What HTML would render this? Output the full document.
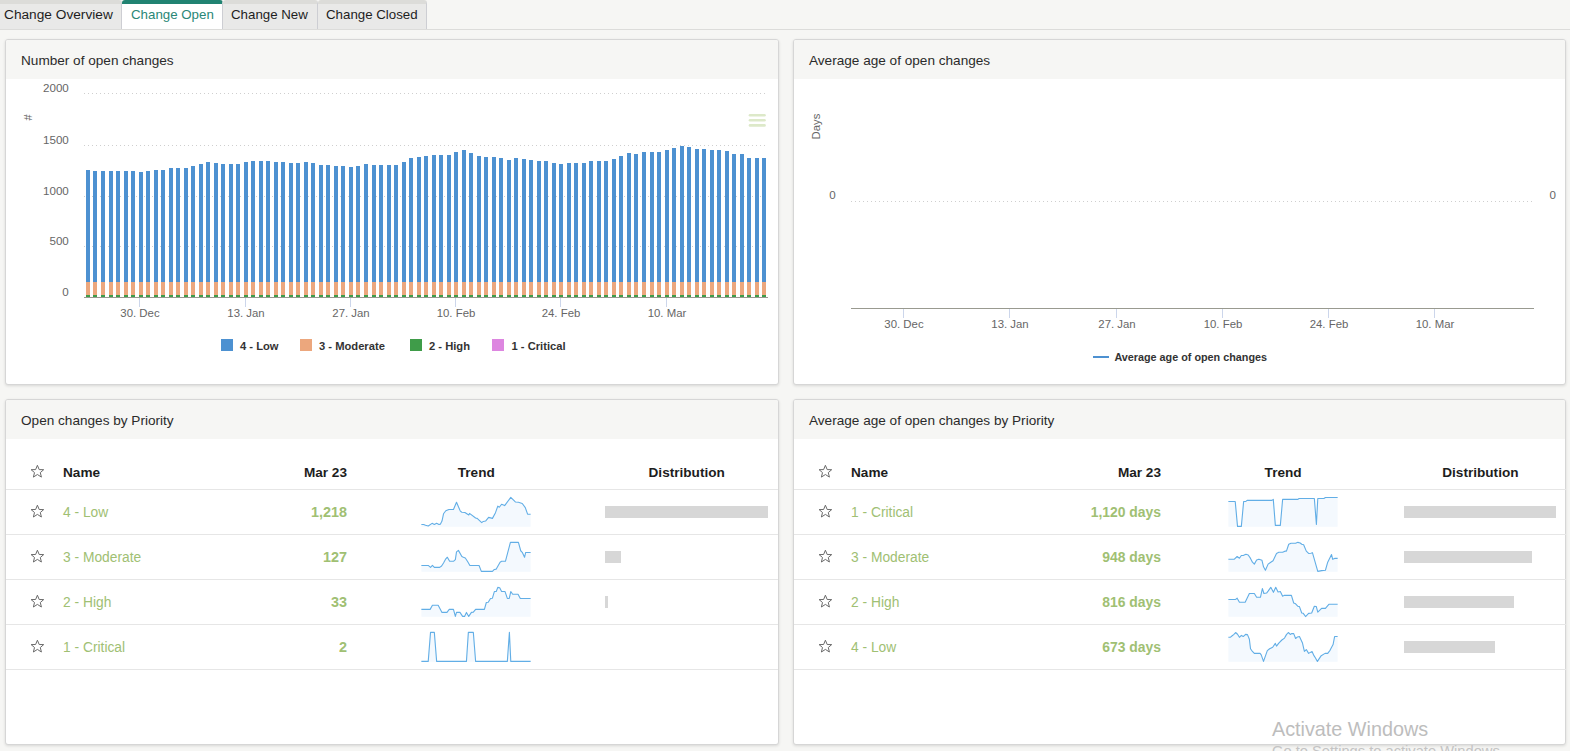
<!DOCTYPE html>
<html><head><meta charset="utf-8"><style>
*{box-sizing:border-box;margin:0;padding:0}
html,body{width:1570px;height:751px;overflow:hidden;background:#f6f6f4;font-family:"Liberation Sans", sans-serif;color:#2b2b2b}
.abs{position:absolute;white-space:nowrap}
.tabbar{position:absolute;left:0;top:0;width:1570px;height:30px;background:#f6f6f4;border-bottom:1px solid #dcdcda}
.tab{position:absolute;top:0;height:29px;background:#e9e9e8;border-top:4px solid #dcdcd9;border-right:1px solid #cdced3;border-radius:3px 3px 0 0;font-size:13.3px;line-height:24px;color:#1e1e1e}
.tab span{position:absolute;top:-1.5px}
.tab.active{background:#fff;border-top-color:#218372;color:#2a8777}
.panel{position:absolute;background:#fff;border:1px solid #d6d6d6;border-radius:3px;box-shadow:0 1px 3px rgba(0,0,0,0.12);overflow:hidden}
.phead{position:absolute;left:0;top:0;right:0;height:39px;background:#f6f6f4}
.ptitle{position:absolute;left:15px;top:12.5px;font-size:13.6px;line-height:16px;color:#2b2b2b;white-space:nowrap}
.sep{position:absolute;height:1px;background:#e6e6e6}
.th{position:absolute;font-size:13.6px;font-weight:700;color:#1d1d1d;line-height:16px;white-space:nowrap}
.td{position:absolute;font-size:13.8px;color:#a0c073;line-height:16px;white-space:nowrap}
.tdb{position:absolute;font-size:13.8px;font-weight:700;color:#a0c073;line-height:16px;white-space:nowrap}
.dist{position:absolute;height:12px;background:#d7d7d7}
svg text{font-family:"Liberation Sans", sans-serif}
</style></head><body>
<div class="tabbar"></div>
<div class="tab" style="left:-4px;width:126px"><span style="left:8px;font-size:13.7px">Change Overview</span></div>
<div class="tab active" style="left:122px;width:101px"><span style="left:9px">Change Open</span></div>
<div class="tab" style="left:223px;width:95px"><span style="left:8px">Change New</span></div>
<div class="tab" style="left:318px;width:109px"><span style="left:8px">Change Closed</span></div>

<div class="panel" style="left:5px;top:39px;width:774px;height:346px"><div class="phead"></div><div class="ptitle">Number of open changes</div></div>
<div class="panel" style="left:793px;top:39px;width:773px;height:346px"><div class="phead"></div><div class="ptitle">Average age of open changes</div></div>
<div class="panel" style="left:5px;top:399px;width:774px;height:346px"><div class="phead"></div><div class="ptitle">Open changes by Priority</div></div>
<div class="panel" style="left:793px;top:399px;width:773px;height:346px"><div class="phead"></div><div class="ptitle">Average age of open changes by Priority</div></div>
<div class="sep" style="left:6px;top:489px;width:772px"></div>
<div class="sep" style="left:6px;top:534px;width:772px"></div>
<div class="sep" style="left:6px;top:579px;width:772px"></div>
<div class="sep" style="left:6px;top:624px;width:772px"></div>
<div class="sep" style="left:6px;top:669px;width:772px"></div>
<div class="th" style="left:63px;top:465px">Name</div>
<div class="th" style="left:147px;width:200px;text-align:right;top:465px">Mar 23</div>
<div class="th" style="left:376.3px;width:200px;text-align:center;top:465px">Trend</div>
<div class="th" style="left:586.7px;width:200px;text-align:center;top:465px">Distribution</div>
<div class="td" style="left:63px;top:505px">4 - Low</div>
<div class="tdb" style="left:147px;width:200px;text-align:right;top:503.6px;font-size:14.4px">1,218</div>
<div class="dist" style="left:605px;top:506px;width:163px"></div>
<div class="td" style="left:63px;top:550px">3 - Moderate</div>
<div class="tdb" style="left:147px;width:200px;text-align:right;top:548.6px;font-size:14.4px">127</div>
<div class="dist" style="left:605px;top:551px;width:16px"></div>
<div class="td" style="left:63px;top:595px">2 - High</div>
<div class="tdb" style="left:147px;width:200px;text-align:right;top:593.6px;font-size:14.4px">33</div>
<div class="dist" style="left:605px;top:596px;width:3px"></div>
<div class="td" style="left:63px;top:640px">1 - Critical</div>
<div class="tdb" style="left:147px;width:200px;text-align:right;top:638.6px;font-size:14.4px">2</div>
<div class="sep" style="left:794px;top:489px;width:772px"></div>
<div class="sep" style="left:794px;top:534px;width:772px"></div>
<div class="sep" style="left:794px;top:579px;width:772px"></div>
<div class="sep" style="left:794px;top:624px;width:772px"></div>
<div class="sep" style="left:794px;top:669px;width:772px"></div>
<div class="th" style="left:851px;top:465px">Name</div>
<div class="th" style="left:961px;width:200px;text-align:right;top:465px">Mar 23</div>
<div class="th" style="left:1183.1px;width:200px;text-align:center;top:465px">Trend</div>
<div class="th" style="left:1380.4px;width:200px;text-align:center;top:465px">Distribution</div>
<div class="td" style="left:851px;top:505px">1 - Critical</div>
<div class="tdb" style="left:961px;width:200px;text-align:right;top:504px;font-size:13.9px">1,120 days</div>
<div class="dist" style="left:1404px;top:506px;width:152px"></div>
<div class="td" style="left:851px;top:550px">3 - Moderate</div>
<div class="tdb" style="left:961px;width:200px;text-align:right;top:549px;font-size:13.9px">948 days</div>
<div class="dist" style="left:1404px;top:551px;width:128px"></div>
<div class="td" style="left:851px;top:595px">2 - High</div>
<div class="tdb" style="left:961px;width:200px;text-align:right;top:594px;font-size:13.9px">816 days</div>
<div class="dist" style="left:1404px;top:596px;width:110px"></div>
<div class="td" style="left:851px;top:640px">4 - Low</div>
<div class="tdb" style="left:961px;width:200px;text-align:right;top:639px;font-size:13.9px">673 days</div>
<div class="dist" style="left:1404px;top:641px;width:91px"></div>
<svg class="abs" style="left:0;top:0" width="1570" height="751" shape-rendering="auto"><line x1="84" y1="93.5" x2="766" y2="93.5" stroke="#cfcfcf" stroke-width="1" stroke-dasharray="1,3"/><line x1="84" y1="145.5" x2="766" y2="145.5" stroke="#cfcfcf" stroke-width="1" stroke-dasharray="1,3"/><line x1="84" y1="196.5" x2="766" y2="196.5" stroke="#cfcfcf" stroke-width="1" stroke-dasharray="1,3"/><line x1="84" y1="246.5" x2="766" y2="246.5" stroke="#cfcfcf" stroke-width="1" stroke-dasharray="1,3"/><rect x="86" y="170" width="4" height="112" fill="#4d91d1"/><rect x="86" y="282" width="4" height="13" fill="#eca77d"/><rect x="86" y="295" width="4" height="2" fill="#3f9c49"/><rect x="93" y="171" width="4" height="111" fill="#4d91d1"/><rect x="93" y="282" width="4" height="13" fill="#eca77d"/><rect x="93" y="295" width="4" height="2" fill="#3f9c49"/><rect x="101" y="171" width="4" height="111" fill="#4d91d1"/><rect x="101" y="282" width="4" height="13" fill="#eca77d"/><rect x="101" y="295" width="4" height="2" fill="#3f9c49"/><rect x="109" y="171" width="4" height="111" fill="#4d91d1"/><rect x="109" y="282" width="4" height="13" fill="#eca77d"/><rect x="109" y="295" width="4" height="2" fill="#3f9c49"/><rect x="116" y="171" width="4" height="111" fill="#4d91d1"/><rect x="116" y="282" width="4" height="13" fill="#eca77d"/><rect x="116" y="295" width="4" height="2" fill="#3f9c49"/><rect x="124" y="171" width="4" height="111" fill="#4d91d1"/><rect x="124" y="282" width="4" height="13" fill="#eca77d"/><rect x="124" y="295" width="4" height="2" fill="#3f9c49"/><rect x="131" y="171" width="4" height="111" fill="#4d91d1"/><rect x="131" y="282" width="4" height="13" fill="#eca77d"/><rect x="131" y="295" width="4" height="2" fill="#3f9c49"/><rect x="139" y="172" width="4" height="110" fill="#4d91d1"/><rect x="139" y="282" width="4" height="13" fill="#eca77d"/><rect x="139" y="295" width="4" height="2" fill="#3f9c49"/><rect x="146" y="171" width="4" height="111" fill="#4d91d1"/><rect x="146" y="282" width="4" height="13" fill="#eca77d"/><rect x="146" y="295" width="4" height="2" fill="#3f9c49"/><rect x="154" y="170" width="4" height="112" fill="#4d91d1"/><rect x="154" y="282" width="4" height="13" fill="#eca77d"/><rect x="154" y="295" width="4" height="2" fill="#3f9c49"/><rect x="161" y="170" width="4" height="112" fill="#4d91d1"/><rect x="161" y="282" width="4" height="13" fill="#eca77d"/><rect x="161" y="295" width="4" height="2" fill="#3f9c49"/><rect x="169" y="168" width="4" height="114" fill="#4d91d1"/><rect x="169" y="282" width="4" height="13" fill="#eca77d"/><rect x="169" y="295" width="4" height="2" fill="#3f9c49"/><rect x="176" y="168" width="4" height="114" fill="#4d91d1"/><rect x="176" y="282" width="4" height="13" fill="#eca77d"/><rect x="176" y="295" width="4" height="2" fill="#3f9c49"/><rect x="184" y="168" width="4" height="114" fill="#4d91d1"/><rect x="184" y="282" width="4" height="13" fill="#eca77d"/><rect x="184" y="295" width="4" height="2" fill="#3f9c49"/><rect x="191" y="166" width="4" height="116" fill="#4d91d1"/><rect x="191" y="282" width="4" height="13" fill="#eca77d"/><rect x="191" y="295" width="4" height="2" fill="#3f9c49"/><rect x="199" y="164" width="4" height="118" fill="#4d91d1"/><rect x="199" y="282" width="4" height="13" fill="#eca77d"/><rect x="199" y="295" width="4" height="2" fill="#3f9c49"/><rect x="206" y="162" width="4" height="120" fill="#4d91d1"/><rect x="206" y="282" width="4" height="13" fill="#eca77d"/><rect x="206" y="295" width="4" height="2" fill="#3f9c49"/><rect x="214" y="163" width="4" height="119" fill="#4d91d1"/><rect x="214" y="282" width="4" height="13" fill="#eca77d"/><rect x="214" y="295" width="4" height="2" fill="#3f9c49"/><rect x="221" y="164" width="4" height="118" fill="#4d91d1"/><rect x="221" y="282" width="4" height="13" fill="#eca77d"/><rect x="221" y="295" width="4" height="2" fill="#3f9c49"/><rect x="229" y="164" width="4" height="118" fill="#4d91d1"/><rect x="229" y="282" width="4" height="13" fill="#eca77d"/><rect x="229" y="295" width="4" height="2" fill="#3f9c49"/><rect x="236" y="164" width="4" height="118" fill="#4d91d1"/><rect x="236" y="282" width="4" height="13" fill="#eca77d"/><rect x="236" y="295" width="4" height="2" fill="#3f9c49"/><rect x="244" y="162" width="4" height="120" fill="#4d91d1"/><rect x="244" y="282" width="4" height="13" fill="#eca77d"/><rect x="244" y="295" width="4" height="2" fill="#3f9c49"/><rect x="251" y="161" width="4" height="121" fill="#4d91d1"/><rect x="251" y="282" width="4" height="13" fill="#eca77d"/><rect x="251" y="295" width="4" height="2" fill="#3f9c49"/><rect x="259" y="161" width="4" height="121" fill="#4d91d1"/><rect x="259" y="282" width="4" height="13" fill="#eca77d"/><rect x="259" y="295" width="4" height="2" fill="#3f9c49"/><rect x="266" y="161" width="4" height="121" fill="#4d91d1"/><rect x="266" y="282" width="4" height="13" fill="#eca77d"/><rect x="266" y="295" width="4" height="2" fill="#3f9c49"/><rect x="274" y="162" width="4" height="120" fill="#4d91d1"/><rect x="274" y="282" width="4" height="13" fill="#eca77d"/><rect x="274" y="295" width="4" height="2" fill="#3f9c49"/><rect x="281" y="162" width="4" height="120" fill="#4d91d1"/><rect x="281" y="282" width="4" height="13" fill="#eca77d"/><rect x="281" y="295" width="4" height="2" fill="#3f9c49"/><rect x="289" y="163" width="4" height="119" fill="#4d91d1"/><rect x="289" y="282" width="4" height="13" fill="#eca77d"/><rect x="289" y="295" width="4" height="2" fill="#3f9c49"/><rect x="296" y="163" width="4" height="119" fill="#4d91d1"/><rect x="296" y="282" width="4" height="13" fill="#eca77d"/><rect x="296" y="295" width="4" height="2" fill="#3f9c49"/><rect x="304" y="162" width="4" height="120" fill="#4d91d1"/><rect x="304" y="282" width="4" height="13" fill="#eca77d"/><rect x="304" y="295" width="4" height="2" fill="#3f9c49"/><rect x="311" y="163" width="4" height="119" fill="#4d91d1"/><rect x="311" y="282" width="4" height="13" fill="#eca77d"/><rect x="311" y="295" width="4" height="2" fill="#3f9c49"/><rect x="319" y="165" width="4" height="117" fill="#4d91d1"/><rect x="319" y="282" width="4" height="13" fill="#eca77d"/><rect x="319" y="295" width="4" height="2" fill="#3f9c49"/><rect x="326" y="165" width="4" height="117" fill="#4d91d1"/><rect x="326" y="282" width="4" height="13" fill="#eca77d"/><rect x="326" y="295" width="4" height="2" fill="#3f9c49"/><rect x="334" y="166" width="4" height="116" fill="#4d91d1"/><rect x="334" y="282" width="4" height="13" fill="#eca77d"/><rect x="334" y="295" width="4" height="2" fill="#3f9c49"/><rect x="341" y="166" width="4" height="116" fill="#4d91d1"/><rect x="341" y="282" width="4" height="13" fill="#eca77d"/><rect x="341" y="295" width="4" height="2" fill="#3f9c49"/><rect x="349" y="167" width="4" height="115" fill="#4d91d1"/><rect x="349" y="282" width="4" height="13" fill="#eca77d"/><rect x="349" y="295" width="4" height="2" fill="#3f9c49"/><rect x="356" y="166" width="4" height="116" fill="#4d91d1"/><rect x="356" y="282" width="4" height="13" fill="#eca77d"/><rect x="356" y="295" width="4" height="2" fill="#3f9c49"/><rect x="364" y="164" width="4" height="118" fill="#4d91d1"/><rect x="364" y="282" width="4" height="13" fill="#eca77d"/><rect x="364" y="295" width="4" height="2" fill="#3f9c49"/><rect x="372" y="165" width="4" height="117" fill="#4d91d1"/><rect x="372" y="282" width="4" height="13" fill="#eca77d"/><rect x="372" y="295" width="4" height="2" fill="#3f9c49"/><rect x="379" y="165" width="4" height="117" fill="#4d91d1"/><rect x="379" y="282" width="4" height="13" fill="#eca77d"/><rect x="379" y="295" width="4" height="2" fill="#3f9c49"/><rect x="387" y="165" width="4" height="117" fill="#4d91d1"/><rect x="387" y="282" width="4" height="13" fill="#eca77d"/><rect x="387" y="295" width="4" height="2" fill="#3f9c49"/><rect x="394" y="165" width="4" height="117" fill="#4d91d1"/><rect x="394" y="282" width="4" height="13" fill="#eca77d"/><rect x="394" y="295" width="4" height="2" fill="#3f9c49"/><rect x="402" y="162" width="4" height="120" fill="#4d91d1"/><rect x="402" y="282" width="4" height="13" fill="#eca77d"/><rect x="402" y="295" width="4" height="2" fill="#3f9c49"/><rect x="409" y="158" width="4" height="124" fill="#4d91d1"/><rect x="409" y="282" width="4" height="13" fill="#eca77d"/><rect x="409" y="295" width="4" height="2" fill="#3f9c49"/><rect x="417" y="157" width="4" height="125" fill="#4d91d1"/><rect x="417" y="282" width="4" height="13" fill="#eca77d"/><rect x="417" y="295" width="4" height="2" fill="#3f9c49"/><rect x="424" y="156" width="4" height="126" fill="#4d91d1"/><rect x="424" y="282" width="4" height="13" fill="#eca77d"/><rect x="424" y="295" width="4" height="2" fill="#3f9c49"/><rect x="432" y="155" width="4" height="127" fill="#4d91d1"/><rect x="432" y="282" width="4" height="13" fill="#eca77d"/><rect x="432" y="295" width="4" height="2" fill="#3f9c49"/><rect x="439" y="155" width="4" height="127" fill="#4d91d1"/><rect x="439" y="282" width="4" height="13" fill="#eca77d"/><rect x="439" y="295" width="4" height="2" fill="#3f9c49"/><rect x="447" y="155" width="4" height="127" fill="#4d91d1"/><rect x="447" y="282" width="4" height="13" fill="#eca77d"/><rect x="447" y="295" width="4" height="2" fill="#3f9c49"/><rect x="454" y="152" width="4" height="130" fill="#4d91d1"/><rect x="454" y="282" width="4" height="13" fill="#eca77d"/><rect x="454" y="295" width="4" height="2" fill="#3f9c49"/><rect x="462" y="150" width="4" height="132" fill="#4d91d1"/><rect x="462" y="282" width="4" height="13" fill="#eca77d"/><rect x="462" y="295" width="4" height="2" fill="#3f9c49"/><rect x="469" y="153" width="4" height="129" fill="#4d91d1"/><rect x="469" y="282" width="4" height="13" fill="#eca77d"/><rect x="469" y="295" width="4" height="2" fill="#3f9c49"/><rect x="477" y="156" width="4" height="126" fill="#4d91d1"/><rect x="477" y="282" width="4" height="13" fill="#eca77d"/><rect x="477" y="295" width="4" height="2" fill="#3f9c49"/><rect x="484" y="157" width="4" height="125" fill="#4d91d1"/><rect x="484" y="282" width="4" height="13" fill="#eca77d"/><rect x="484" y="295" width="4" height="2" fill="#3f9c49"/><rect x="492" y="157" width="4" height="125" fill="#4d91d1"/><rect x="492" y="282" width="4" height="13" fill="#eca77d"/><rect x="492" y="295" width="4" height="2" fill="#3f9c49"/><rect x="499" y="158" width="4" height="124" fill="#4d91d1"/><rect x="499" y="282" width="4" height="13" fill="#eca77d"/><rect x="499" y="295" width="4" height="2" fill="#3f9c49"/><rect x="507" y="160" width="4" height="122" fill="#4d91d1"/><rect x="507" y="282" width="4" height="13" fill="#eca77d"/><rect x="507" y="295" width="4" height="2" fill="#3f9c49"/><rect x="514" y="158" width="4" height="124" fill="#4d91d1"/><rect x="514" y="282" width="4" height="13" fill="#eca77d"/><rect x="514" y="295" width="4" height="2" fill="#3f9c49"/><rect x="522" y="159" width="4" height="123" fill="#4d91d1"/><rect x="522" y="282" width="4" height="13" fill="#eca77d"/><rect x="522" y="295" width="4" height="2" fill="#3f9c49"/><rect x="529" y="160" width="4" height="122" fill="#4d91d1"/><rect x="529" y="282" width="4" height="13" fill="#eca77d"/><rect x="529" y="295" width="4" height="2" fill="#3f9c49"/><rect x="537" y="161" width="4" height="121" fill="#4d91d1"/><rect x="537" y="282" width="4" height="13" fill="#eca77d"/><rect x="537" y="295" width="4" height="2" fill="#3f9c49"/><rect x="544" y="161" width="4" height="121" fill="#4d91d1"/><rect x="544" y="282" width="4" height="13" fill="#eca77d"/><rect x="544" y="295" width="4" height="2" fill="#3f9c49"/><rect x="552" y="163" width="4" height="119" fill="#4d91d1"/><rect x="552" y="282" width="4" height="13" fill="#eca77d"/><rect x="552" y="295" width="4" height="2" fill="#3f9c49"/><rect x="559" y="164" width="4" height="118" fill="#4d91d1"/><rect x="559" y="282" width="4" height="13" fill="#eca77d"/><rect x="559" y="295" width="4" height="2" fill="#3f9c49"/><rect x="567" y="163" width="4" height="119" fill="#4d91d1"/><rect x="567" y="282" width="4" height="13" fill="#eca77d"/><rect x="567" y="295" width="4" height="2" fill="#3f9c49"/><rect x="574" y="163" width="4" height="119" fill="#4d91d1"/><rect x="574" y="282" width="4" height="13" fill="#eca77d"/><rect x="574" y="295" width="4" height="2" fill="#3f9c49"/><rect x="582" y="163" width="4" height="119" fill="#4d91d1"/><rect x="582" y="282" width="4" height="13" fill="#eca77d"/><rect x="582" y="295" width="4" height="2" fill="#3f9c49"/><rect x="589" y="161" width="4" height="121" fill="#4d91d1"/><rect x="589" y="282" width="4" height="13" fill="#eca77d"/><rect x="589" y="295" width="4" height="2" fill="#3f9c49"/><rect x="597" y="161" width="4" height="121" fill="#4d91d1"/><rect x="597" y="282" width="4" height="13" fill="#eca77d"/><rect x="597" y="295" width="4" height="2" fill="#3f9c49"/><rect x="604" y="161" width="4" height="121" fill="#4d91d1"/><rect x="604" y="282" width="4" height="13" fill="#eca77d"/><rect x="604" y="295" width="4" height="2" fill="#3f9c49"/><rect x="612" y="159" width="4" height="123" fill="#4d91d1"/><rect x="612" y="282" width="4" height="13" fill="#eca77d"/><rect x="612" y="295" width="4" height="2" fill="#3f9c49"/><rect x="619" y="156" width="4" height="126" fill="#4d91d1"/><rect x="619" y="282" width="4" height="13" fill="#eca77d"/><rect x="619" y="295" width="4" height="2" fill="#3f9c49"/><rect x="627" y="153" width="4" height="129" fill="#4d91d1"/><rect x="627" y="282" width="4" height="13" fill="#eca77d"/><rect x="627" y="295" width="4" height="2" fill="#3f9c49"/><rect x="634" y="154" width="4" height="128" fill="#4d91d1"/><rect x="634" y="282" width="4" height="13" fill="#eca77d"/><rect x="634" y="295" width="4" height="2" fill="#3f9c49"/><rect x="642" y="152" width="4" height="130" fill="#4d91d1"/><rect x="642" y="282" width="4" height="13" fill="#eca77d"/><rect x="642" y="295" width="4" height="2" fill="#3f9c49"/><rect x="650" y="152" width="4" height="130" fill="#4d91d1"/><rect x="650" y="282" width="4" height="13" fill="#eca77d"/><rect x="650" y="295" width="4" height="2" fill="#3f9c49"/><rect x="657" y="152" width="4" height="130" fill="#4d91d1"/><rect x="657" y="282" width="4" height="13" fill="#eca77d"/><rect x="657" y="295" width="4" height="2" fill="#3f9c49"/><rect x="665" y="150" width="4" height="132" fill="#4d91d1"/><rect x="665" y="282" width="4" height="13" fill="#eca77d"/><rect x="665" y="295" width="4" height="2" fill="#3f9c49"/><rect x="672" y="148" width="4" height="134" fill="#4d91d1"/><rect x="672" y="282" width="4" height="13" fill="#eca77d"/><rect x="672" y="295" width="4" height="2" fill="#3f9c49"/><rect x="680" y="146" width="4" height="136" fill="#4d91d1"/><rect x="680" y="282" width="4" height="13" fill="#eca77d"/><rect x="680" y="295" width="4" height="2" fill="#3f9c49"/><rect x="687" y="147" width="4" height="135" fill="#4d91d1"/><rect x="687" y="282" width="4" height="13" fill="#eca77d"/><rect x="687" y="295" width="4" height="2" fill="#3f9c49"/><rect x="695" y="149" width="4" height="133" fill="#4d91d1"/><rect x="695" y="282" width="4" height="13" fill="#eca77d"/><rect x="695" y="295" width="4" height="2" fill="#3f9c49"/><rect x="702" y="149" width="4" height="133" fill="#4d91d1"/><rect x="702" y="282" width="4" height="13" fill="#eca77d"/><rect x="702" y="295" width="4" height="2" fill="#3f9c49"/><rect x="710" y="150" width="4" height="132" fill="#4d91d1"/><rect x="710" y="282" width="4" height="13" fill="#eca77d"/><rect x="710" y="295" width="4" height="2" fill="#3f9c49"/><rect x="717" y="150" width="4" height="132" fill="#4d91d1"/><rect x="717" y="282" width="4" height="13" fill="#eca77d"/><rect x="717" y="295" width="4" height="2" fill="#3f9c49"/><rect x="725" y="151" width="4" height="131" fill="#4d91d1"/><rect x="725" y="282" width="4" height="13" fill="#eca77d"/><rect x="725" y="295" width="4" height="2" fill="#3f9c49"/><rect x="732" y="154" width="4" height="128" fill="#4d91d1"/><rect x="732" y="282" width="4" height="13" fill="#eca77d"/><rect x="732" y="295" width="4" height="2" fill="#3f9c49"/><rect x="740" y="154" width="4" height="128" fill="#4d91d1"/><rect x="740" y="282" width="4" height="13" fill="#eca77d"/><rect x="740" y="295" width="4" height="2" fill="#3f9c49"/><rect x="747" y="158" width="4" height="124" fill="#4d91d1"/><rect x="747" y="282" width="4" height="13" fill="#eca77d"/><rect x="747" y="295" width="4" height="2" fill="#3f9c49"/><rect x="755" y="158" width="4" height="124" fill="#4d91d1"/><rect x="755" y="282" width="4" height="13" fill="#eca77d"/><rect x="755" y="295" width="4" height="2" fill="#3f9c49"/><rect x="762" y="158" width="4" height="124" fill="#4d91d1"/><rect x="762" y="282" width="4" height="13" fill="#eca77d"/><rect x="762" y="295" width="4" height="2" fill="#3f9c49"/><line x1="84" y1="297.5" x2="768" y2="297.5" stroke="#999a90" stroke-width="1"/><line x1="139.5" y1="298" x2="139.5" y2="307" stroke="#ccd6eb" stroke-width="1"/><text x="140.0" y="317" text-anchor="middle" font-size="11.4" fill="#666">30. Dec</text><line x1="245.5" y1="298" x2="245.5" y2="307" stroke="#ccd6eb" stroke-width="1"/><text x="246.0" y="317" text-anchor="middle" font-size="11.4" fill="#666">13. Jan</text><line x1="350.5" y1="298" x2="350.5" y2="307" stroke="#ccd6eb" stroke-width="1"/><text x="351.0" y="317" text-anchor="middle" font-size="11.4" fill="#666">27. Jan</text><line x1="455.5" y1="298" x2="455.5" y2="307" stroke="#ccd6eb" stroke-width="1"/><text x="456.0" y="317" text-anchor="middle" font-size="11.4" fill="#666">10. Feb</text><line x1="560.5" y1="298" x2="560.5" y2="307" stroke="#ccd6eb" stroke-width="1"/><text x="561.0" y="317" text-anchor="middle" font-size="11.4" fill="#666">24. Feb</text><line x1="666.5" y1="298" x2="666.5" y2="307" stroke="#ccd6eb" stroke-width="1"/><text x="667.0" y="317" text-anchor="middle" font-size="11.4" fill="#666">10. Mar</text><text x="68.8" y="91.8" text-anchor="end" font-size="11.6" fill="#666">2000</text><text x="68.8" y="143.8" text-anchor="end" font-size="11.6" fill="#666">1500</text><text x="68.8" y="194.8" text-anchor="end" font-size="11.6" fill="#666">1000</text><text x="68.8" y="244.8" text-anchor="end" font-size="11.6" fill="#666">500</text><text x="68.8" y="295.8" text-anchor="end" font-size="11.6" fill="#666">0</text><text transform="translate(31.5,117.5) rotate(-90)" text-anchor="middle" font-size="11" fill="#666">#</text><line x1="750" y1="115.3" x2="764.5" y2="115.3" stroke="#dde9c9" stroke-width="2.6" stroke-linecap="round"/><line x1="750" y1="120.3" x2="764.5" y2="120.3" stroke="#dde9c9" stroke-width="2.6" stroke-linecap="round"/><line x1="750" y1="125.4" x2="764.5" y2="125.4" stroke="#dde9c9" stroke-width="2.6" stroke-linecap="round"/><rect x="221" y="339" width="12" height="12" fill="#4d91d1"/><text x="240" y="350.2" font-size="11.2" font-weight="700" fill="#333">4 - Low</text><rect x="300" y="339" width="12" height="12" fill="#eca77d"/><text x="319" y="350.2" font-size="11.2" font-weight="700" fill="#333">3 - Moderate</text><rect x="410" y="339" width="12" height="12" fill="#3f9c49"/><text x="429" y="350.2" font-size="11.2" font-weight="700" fill="#333">2 - High</text><rect x="492" y="339" width="12" height="12" fill="#dd86e0"/><text x="511.5" y="350.2" font-size="11.2" font-weight="700" fill="#333">1 - Critical</text><line x1="851" y1="201.5" x2="1533" y2="201.5" stroke="#cfcfcf" stroke-width="1" stroke-dasharray="1,3"/><line x1="851" y1="308.5" x2="1534" y2="308.5" stroke="#999a90" stroke-width="1"/><line x1="903.5" y1="309" x2="903.5" y2="318" stroke="#ccd6eb" stroke-width="1"/><text x="904.0" y="328.3" text-anchor="middle" font-size="11.4" fill="#666">30. Dec</text><line x1="1009.5" y1="309" x2="1009.5" y2="318" stroke="#ccd6eb" stroke-width="1"/><text x="1010.0" y="328.3" text-anchor="middle" font-size="11.4" fill="#666">13. Jan</text><line x1="1116.5" y1="309" x2="1116.5" y2="318" stroke="#ccd6eb" stroke-width="1"/><text x="1117.0" y="328.3" text-anchor="middle" font-size="11.4" fill="#666">27. Jan</text><line x1="1222.5" y1="309" x2="1222.5" y2="318" stroke="#ccd6eb" stroke-width="1"/><text x="1223.0" y="328.3" text-anchor="middle" font-size="11.4" fill="#666">10. Feb</text><line x1="1328.5" y1="309" x2="1328.5" y2="318" stroke="#ccd6eb" stroke-width="1"/><text x="1329.0" y="328.3" text-anchor="middle" font-size="11.4" fill="#666">24. Feb</text><line x1="1434.5" y1="309" x2="1434.5" y2="318" stroke="#ccd6eb" stroke-width="1"/><text x="1435.0" y="328.3" text-anchor="middle" font-size="11.4" fill="#666">10. Mar</text><text x="835.8" y="199.2" text-anchor="end" font-size="11.6" fill="#666">0</text><text x="1549.5" y="199.2" font-size="11.6" fill="#666">0</text><text transform="translate(819.5,126.5) rotate(-90)" text-anchor="middle" font-size="11.3" fill="#666">Days</text><line x1="1093" y1="357" x2="1109" y2="357" stroke="#4d91d1" stroke-width="2"/><text x="1114.4" y="360.6" font-size="10.8" font-weight="700" fill="#333">Average age of open changes</text><path d="M421.35,524.48 L423.64,524.48 L425.55,525.25 L428.23,526.01 L432.05,523.34 L434.34,524.48 L436.64,523.34 L438.93,524.48 L440.46,524.10 L441.99,521.05 L443.52,513.78 L445.81,510.73 L448.87,509.43 L453.45,509.43 L456.51,502.32 L460.33,511.11 L461.86,512.26 L464.92,512.48 L468.74,514.93 L469.50,513.40 L475.62,517.99 L477.15,518.37 L481.73,522.57 L483.26,521.43 L485.56,521.05 L488.61,517.38 L492.44,518.37 L495.49,512.64 L497.79,506.14 L499.31,507.29 L501.61,504.23 L504.66,505.61 L510.78,497.35 L515.37,501.94 L518.42,502.32 L522.24,503.47 L525.30,507.67 L527.60,514.17 L530.65,514.32 L530.65,526.78 L421.35,526.78 Z" fill="#f4f9fe" stroke="none"/><path d="M421.35,524.48 L423.64,524.48 L425.55,525.25 L428.23,526.01 L432.05,523.34 L434.34,524.48 L436.64,523.34 L438.93,524.48 L440.46,524.10 L441.99,521.05 L443.52,513.78 L445.81,510.73 L448.87,509.43 L453.45,509.43 L456.51,502.32 L460.33,511.11 L461.86,512.26 L464.92,512.48 L468.74,514.93 L469.50,513.40 L475.62,517.99 L477.15,518.37 L481.73,522.57 L483.26,521.43 L485.56,521.05 L488.61,517.38 L492.44,518.37 L495.49,512.64 L497.79,506.14 L499.31,507.29 L501.61,504.23 L504.66,505.61 L510.78,497.35 L515.37,501.94 L518.42,502.32 L522.24,503.47 L525.30,507.67 L527.60,514.17 L530.65,514.32" fill="none" stroke="#62aee6" stroke-width="1.1" stroke-linejoin="round"/><path d="M421.35,565.43 L428.23,565.43 L430.52,567.42 L432.43,565.43 L434.34,567.42 L439.69,567.42 L441.61,566.05 L443.52,562.99 L445.81,558.78 L447.34,557.26 L449.63,561.31 L453.45,561.31 L455.36,559.55 L456.51,551.90 L458.42,550.38 L461.86,556.49 L463.39,557.26 L465.30,558.02 L467.59,561.46 L469.89,565.43 L479.06,565.43 L481.35,571.40 L492.44,571.40 L494.35,569.48 L496.26,569.10 L500.08,562.22 L501.61,561.31 L505.43,561.31 L510.40,542.35 L518.42,542.35 L520.72,550.76 L522.24,552.29 L524.54,557.26 L525.68,552.44 L530.65,552.44 L530.65,571.78 L421.35,571.78 Z" fill="#f4f9fe" stroke="none"/><path d="M421.35,565.43 L428.23,565.43 L430.52,567.42 L432.43,565.43 L434.34,567.42 L439.69,567.42 L441.61,566.05 L443.52,562.99 L445.81,558.78 L447.34,557.26 L449.63,561.31 L453.45,561.31 L455.36,559.55 L456.51,551.90 L458.42,550.38 L461.86,556.49 L463.39,557.26 L465.30,558.02 L467.59,561.46 L469.89,565.43 L479.06,565.43 L481.35,571.40 L492.44,571.40 L494.35,569.48 L496.26,569.10 L500.08,562.22 L501.61,561.31 L505.43,561.31 L510.40,542.35 L518.42,542.35 L520.72,550.76 L522.24,552.29 L524.54,557.26 L525.68,552.44 L530.65,552.44" fill="none" stroke="#62aee6" stroke-width="1.1" stroke-linejoin="round"/><path d="M421.35,609.36 L430.14,609.36 L432.43,605.31 L438.17,605.31 L441.99,612.42 L446.96,612.42 L449.25,609.36 L453.45,609.36 L455.36,616.40 L456.51,612.42 L459.95,612.42 L462.63,616.40 L464.54,616.40 L466.45,612.42 L468.74,616.40 L471.42,612.42 L473.33,612.19 L475.62,609.36 L484.41,609.36 L486.32,602.48 L488.23,602.26 L490.52,598.43 L492.44,598.20 L494.35,591.55 L496.26,591.55 L497.79,587.35 L499.70,587.73 L501.61,591.55 L505.05,591.55 L507.34,598.43 L509.25,598.43 L510.78,591.55 L512.69,594.23 L518.04,594.23 L520.33,598.43 L530.65,598.43 L530.65,616.78 L421.35,616.78 Z" fill="#f4f9fe" stroke="none"/><path d="M421.35,609.36 L430.14,609.36 L432.43,605.31 L438.17,605.31 L441.99,612.42 L446.96,612.42 L449.25,609.36 L453.45,609.36 L455.36,616.40 L456.51,612.42 L459.95,612.42 L462.63,616.40 L464.54,616.40 L466.45,612.42 L468.74,616.40 L471.42,612.42 L473.33,612.19 L475.62,609.36 L484.41,609.36 L486.32,602.48 L488.23,602.26 L490.52,598.43 L492.44,598.20 L494.35,591.55 L496.26,591.55 L497.79,587.35 L499.70,587.73 L501.61,591.55 L505.05,591.55 L507.34,598.43 L509.25,598.43 L510.78,591.55 L512.69,594.23 L518.04,594.23 L520.33,598.43 L530.65,598.43" fill="none" stroke="#62aee6" stroke-width="1.1" stroke-linejoin="round"/><path d="M421.35,661.40 L428.23,661.40 L430.52,632.35 L434.34,632.35 L436.64,661.40 L466.45,661.40 L468.36,632.35 L473.33,632.35 L475.62,661.40 L507.34,661.40 L509.40,632.35 L510.78,661.40 L530.65,661.40 L530.65,661.78 L421.35,661.78 Z" fill="#f4f9fe" stroke="none"/><path d="M421.35,661.40 L428.23,661.40 L430.52,632.35 L434.34,632.35 L436.64,661.40 L466.45,661.40 L468.36,632.35 L473.33,632.35 L475.62,661.40 L507.34,661.40 L509.40,632.35 L510.78,661.40 L530.65,661.40" fill="none" stroke="#62aee6" stroke-width="1.1" stroke-linejoin="round"/><path d="M1228.35,501.55 L1235.23,501.55 L1237.52,526.40 L1241.34,526.40 L1243.64,501.55 L1245.93,501.33 L1247.08,500.41 L1271.92,500.41 L1273.29,499.41 L1275.36,525.40 L1280.33,525.40 L1282.62,499.41 L1297.91,499.41 L1299.05,498.50 L1314.34,498.50 L1316.40,524.48 L1317.78,498.50 L1323.89,498.50 L1325.42,497.50 L1337.65,497.50 L1337.65,526.78 L1228.35,526.78 Z" fill="#f4f9fe" stroke="none"/><path d="M1228.35,501.55 L1235.23,501.55 L1237.52,526.40 L1241.34,526.40 L1243.64,501.55 L1245.93,501.33 L1247.08,500.41 L1271.92,500.41 L1273.29,499.41 L1275.36,525.40 L1280.33,525.40 L1282.62,499.41 L1297.91,499.41 L1299.05,498.50 L1314.34,498.50 L1316.40,524.48 L1317.78,498.50 L1323.89,498.50 L1325.42,497.50 L1337.65,497.50" fill="none" stroke="#62aee6" stroke-width="1.1" stroke-linejoin="round"/><path d="M1228.35,559.32 L1234.08,559.32 L1237.14,556.49 L1239.43,558.25 L1241.34,555.50 L1243.64,555.34 L1245.93,554.20 L1248.22,554.96 L1250.52,558.40 L1252.43,562.22 L1254.34,564.13 L1256.63,559.93 L1258.92,559.17 L1261.98,560.31 L1263.51,566.81 L1265.42,570.25 L1268.10,564.13 L1270.77,562.22 L1273.06,560.69 L1276.50,553.43 L1278.80,552.29 L1282.62,552.29 L1284.91,551.14 L1286.44,551.14 L1288.73,544.26 L1291.03,543.27 L1295.61,543.27 L1297.91,542.35 L1300.20,542.96 L1301.73,544.26 L1303.64,544.80 L1306.31,551.14 L1308.61,553.43 L1310.90,553.20 L1312.43,552.67 L1317.78,571.40 L1321.60,570.63 L1325.42,570.25 L1327.72,562.22 L1331.54,554.58 L1332.68,559.32 L1334.60,558.40 L1337.65,558.40 L1337.65,571.78 L1228.35,571.78 Z" fill="#f4f9fe" stroke="none"/><path d="M1228.35,559.32 L1234.08,559.32 L1237.14,556.49 L1239.43,558.25 L1241.34,555.50 L1243.64,555.34 L1245.93,554.20 L1248.22,554.96 L1250.52,558.40 L1252.43,562.22 L1254.34,564.13 L1256.63,559.93 L1258.92,559.17 L1261.98,560.31 L1263.51,566.81 L1265.42,570.25 L1268.10,564.13 L1270.77,562.22 L1273.06,560.69 L1276.50,553.43 L1278.80,552.29 L1282.62,552.29 L1284.91,551.14 L1286.44,551.14 L1288.73,544.26 L1291.03,543.27 L1295.61,543.27 L1297.91,542.35 L1300.20,542.96 L1301.73,544.26 L1303.64,544.80 L1306.31,551.14 L1308.61,553.43 L1310.90,553.20 L1312.43,552.67 L1317.78,571.40 L1321.60,570.63 L1325.42,570.25 L1327.72,562.22 L1331.54,554.58 L1332.68,559.32 L1334.60,558.40 L1337.65,558.40" fill="none" stroke="#62aee6" stroke-width="1.1" stroke-linejoin="round"/><path d="M1228.35,599.43 L1235.61,599.43 L1237.14,598.20 L1239.43,602.26 L1245.17,602.26 L1249.37,593.47 L1254.34,593.47 L1256.63,597.29 L1260.45,597.29 L1262.36,588.50 L1263.89,593.47 L1266.57,593.08 L1268.10,591.17 L1270.77,587.35 L1273.45,592.32 L1275.74,587.35 L1278.03,591.94 L1280.33,591.55 L1282.62,596.14 L1284.15,595.38 L1291.41,595.38 L1293.70,603.02 L1295.61,603.78 L1297.91,606.31 L1299.44,606.61 L1301.73,612.96 L1303.26,613.34 L1305.55,616.55 L1308.61,613.34 L1311.66,612.96 L1314.34,606.31 L1316.25,606.46 L1317.78,612.19 L1321.60,608.37 L1325.42,608.37 L1328.86,604.32 L1337.65,604.32 L1337.65,616.78 L1228.35,616.78 Z" fill="#f4f9fe" stroke="none"/><path d="M1228.35,599.43 L1235.61,599.43 L1237.14,598.20 L1239.43,602.26 L1245.17,602.26 L1249.37,593.47 L1254.34,593.47 L1256.63,597.29 L1260.45,597.29 L1262.36,588.50 L1263.89,593.47 L1266.57,593.08 L1268.10,591.17 L1270.77,587.35 L1273.45,592.32 L1275.74,587.35 L1278.03,591.94 L1280.33,591.55 L1282.62,596.14 L1284.15,595.38 L1291.41,595.38 L1293.70,603.02 L1295.61,603.78 L1297.91,606.31 L1299.44,606.61 L1301.73,612.96 L1303.26,613.34 L1305.55,616.55 L1308.61,613.34 L1311.66,612.96 L1314.34,606.31 L1316.25,606.46 L1317.78,612.19 L1321.60,608.37 L1325.42,608.37 L1328.86,604.32 L1337.65,604.32" fill="none" stroke="#62aee6" stroke-width="1.1" stroke-linejoin="round"/><path d="M1228.35,637.32 L1230.26,637.32 L1232.17,635.79 L1233.70,634.64 L1235.61,632.50 L1237.52,634.26 L1239.43,637.32 L1241.34,635.41 L1243.26,636.55 L1245.55,634.41 L1247.46,634.64 L1249.37,639.23 L1250.52,648.78 L1252.43,651.46 L1254.34,653.37 L1260.07,653.37 L1261.22,654.90 L1263.51,661.40 L1267.33,650.69 L1269.63,648.78 L1272.68,647.26 L1275.36,643.43 L1276.50,646.11 L1278.80,643.05 L1281.86,639.99 L1284.53,638.08 L1286.44,634.64 L1288.35,632.50 L1290.26,634.41 L1291.79,633.50 L1293.70,633.65 L1295.61,638.47 L1297.52,636.94 L1299.44,636.55 L1302.49,643.05 L1304.40,651.46 L1306.31,649.55 L1308.61,653.37 L1312.05,651.46 L1313.96,655.66 L1315.49,657.96 L1317.40,661.40 L1321.22,655.66 L1325.04,653.37 L1327.72,653.37 L1330.01,650.31 L1333.07,644.58 L1334.60,636.55 L1337.65,636.55 L1337.65,661.78 L1228.35,661.78 Z" fill="#f4f9fe" stroke="none"/><path d="M1228.35,637.32 L1230.26,637.32 L1232.17,635.79 L1233.70,634.64 L1235.61,632.50 L1237.52,634.26 L1239.43,637.32 L1241.34,635.41 L1243.26,636.55 L1245.55,634.41 L1247.46,634.64 L1249.37,639.23 L1250.52,648.78 L1252.43,651.46 L1254.34,653.37 L1260.07,653.37 L1261.22,654.90 L1263.51,661.40 L1267.33,650.69 L1269.63,648.78 L1272.68,647.26 L1275.36,643.43 L1276.50,646.11 L1278.80,643.05 L1281.86,639.99 L1284.53,638.08 L1286.44,634.64 L1288.35,632.50 L1290.26,634.41 L1291.79,633.50 L1293.70,633.65 L1295.61,638.47 L1297.52,636.94 L1299.44,636.55 L1302.49,643.05 L1304.40,651.46 L1306.31,649.55 L1308.61,653.37 L1312.05,651.46 L1313.96,655.66 L1315.49,657.96 L1317.40,661.40 L1321.22,655.66 L1325.04,653.37 L1327.72,653.37 L1330.01,650.31 L1333.07,644.58 L1334.60,636.55 L1337.65,636.55" fill="none" stroke="#62aee6" stroke-width="1.1" stroke-linejoin="round"/><path d="M37.40,465.30 L39.20,469.60 L43.70,469.70 L40.30,472.60 L41.40,477.10 L37.40,474.50 L33.40,477.10 L34.50,472.60 L31.10,469.70 L35.60,469.60 Z" fill="none" stroke="#6a6a6a" stroke-width="1" stroke-linejoin="miter"/><path d="M37.40,505.20 L39.20,509.50 L43.70,509.60 L40.30,512.50 L41.40,517.00 L37.40,514.40 L33.40,517.00 L34.50,512.50 L31.10,509.60 L35.60,509.50 Z" fill="none" stroke="#6a6a6a" stroke-width="1" stroke-linejoin="miter"/><path d="M37.40,550.20 L39.20,554.50 L43.70,554.60 L40.30,557.50 L41.40,562.00 L37.40,559.40 L33.40,562.00 L34.50,557.50 L31.10,554.60 L35.60,554.50 Z" fill="none" stroke="#6a6a6a" stroke-width="1" stroke-linejoin="miter"/><path d="M37.40,595.20 L39.20,599.50 L43.70,599.60 L40.30,602.50 L41.40,607.00 L37.40,604.40 L33.40,607.00 L34.50,602.50 L31.10,599.60 L35.60,599.50 Z" fill="none" stroke="#6a6a6a" stroke-width="1" stroke-linejoin="miter"/><path d="M37.40,640.20 L39.20,644.50 L43.70,644.60 L40.30,647.50 L41.40,652.00 L37.40,649.40 L33.40,652.00 L34.50,647.50 L31.10,644.60 L35.60,644.50 Z" fill="none" stroke="#6a6a6a" stroke-width="1" stroke-linejoin="miter"/><path d="M825.40,465.30 L827.20,469.60 L831.70,469.70 L828.30,472.60 L829.40,477.10 L825.40,474.50 L821.40,477.10 L822.50,472.60 L819.10,469.70 L823.60,469.60 Z" fill="none" stroke="#6a6a6a" stroke-width="1" stroke-linejoin="miter"/><path d="M825.40,505.20 L827.20,509.50 L831.70,509.60 L828.30,512.50 L829.40,517.00 L825.40,514.40 L821.40,517.00 L822.50,512.50 L819.10,509.60 L823.60,509.50 Z" fill="none" stroke="#6a6a6a" stroke-width="1" stroke-linejoin="miter"/><path d="M825.40,550.20 L827.20,554.50 L831.70,554.60 L828.30,557.50 L829.40,562.00 L825.40,559.40 L821.40,562.00 L822.50,557.50 L819.10,554.60 L823.60,554.50 Z" fill="none" stroke="#6a6a6a" stroke-width="1" stroke-linejoin="miter"/><path d="M825.40,595.20 L827.20,599.50 L831.70,599.60 L828.30,602.50 L829.40,607.00 L825.40,604.40 L821.40,607.00 L822.50,602.50 L819.10,599.60 L823.60,599.50 Z" fill="none" stroke="#6a6a6a" stroke-width="1" stroke-linejoin="miter"/><path d="M825.40,640.20 L827.20,644.50 L831.70,644.60 L828.30,647.50 L829.40,652.00 L825.40,649.40 L821.40,652.00 L822.50,647.50 L819.10,644.60 L823.60,644.50 Z" fill="none" stroke="#6a6a6a" stroke-width="1" stroke-linejoin="miter"/></svg>
<div class="abs" style="left:1272px;top:717px;font-size:19.8px;color:#bdbdbd;line-height:24px">Activate Windows</div>
<div class="abs" style="left:1272px;top:743px;font-size:14.7px;color:#c4c4c4;line-height:16px">Go to Settings to activate Windows.</div>
</body></html>
